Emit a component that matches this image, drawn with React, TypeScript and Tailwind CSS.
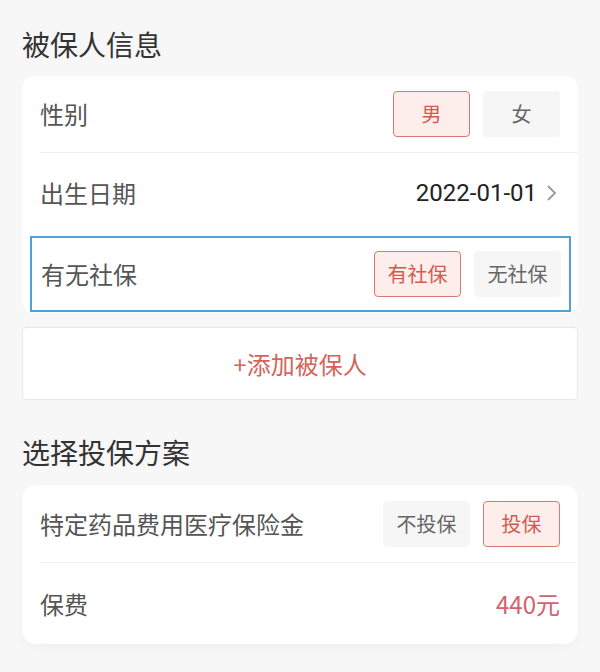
import React, { useState } from 'react';

const font = { fontFamily: '"Noto Sans CJK SC", "Noto Sans", sans-serif' };

const Choice: React.FC<{ label: string; active: boolean; onClick: () => void; wide?: boolean }> = ({ label, active, onClick, wide }) => (
  <button
    onClick={onClick}
    className={`h-[46px] ${wide ? 'w-[87px]' : 'w-[77px]'} rounded-[4px] text-[20px] leading-none border ${
      active ? 'bg-[#fdeeec] border-[#d87a72] text-[#d45a4e]' : 'bg-[#f6f6f6] border-transparent text-[#666]'
    }`}
  >
    {label}
  </button>
);

const App: React.FC = () => {
  const [gender, setGender] = useState('男');
  const [social, setSocial] = useState('有社保');
  const [buy, setBuy] = useState(true);

  return (
    <div className="min-h-[672px] w-[600px] bg-[#f7f7f7] px-[22px] pt-[28px]" style={font}>
      <h2 className="text-[28px] leading-[32px] text-[#333] mb-[16px]">被保人信息</h2>

      <div className="bg-white rounded-[12px]">
        <div className="flex items-center justify-between h-[77px] ml-[18px] pr-[18px] border-b border-[#f0f0f0]">
          <span className="text-[24px] text-[#555]">性别</span>
          <div className="flex gap-[13px]">
            <Choice label="男" active={gender === '男'} onClick={() => setGender('男')} />
            <Choice label="女" active={gender === '女'} onClick={() => setGender('女')} />
          </div>
        </div>

        <div className="flex items-center justify-between h-[79px] ml-[18px] pr-[20px]">
          <span className="text-[24px] text-[#555]">出生日期</span>
          <div className="flex items-center gap-[9px]">
            <span className="text-[24px] leading-none text-[#222]" style={{ fontFamily: '"Roboto", "Noto Sans", sans-serif' }}>2022-01-01</span>
            <svg width="12" height="18" viewBox="0 0 12 18" fill="none" stroke="#999" strokeWidth="1.8">
              <path d="M2 2l7 7-7 7" />
            </svg>
          </div>
        </div>

        <div className="pt-[4px] pb-[1px]">
          <div className="mx-[8px] mr-[7px] h-[76px] border-2 border-[#4ea1d9] flex items-center justify-between pl-[9px] pr-[8px]">
            <span className="text-[24px] text-[#555]">有无社保</span>
            <div className="flex gap-[13px]">
              <Choice label="有社保" wide active={social === '有社保'} onClick={() => setSocial('有社保')} />
              <Choice label="无社保" wide active={social === '无社保'} onClick={() => setSocial('无社保')} />
            </div>
          </div>
        </div>
      </div>

      <button className="mt-[14px] w-full h-[73px] bg-white rounded-[4px] border border-[#e8e8e8] text-[24px] text-[#d4645a]">
        +添加被保人
      </button>

      <h2 className="mt-[36px] text-[28px] leading-[32px] text-[#333] mb-[17px]">选择投保方案</h2>

      <div className="bg-white rounded-[14px] shadow-[0_4px_10px_rgba(0,0,0,0.03)]">
        <div className="flex items-center justify-between h-[78px] ml-[18px] pr-[18px] border-b border-[#f0f0f0]">
          <span className="text-[24px] text-[#555]">特定药品费用医疗保险金</span>
          <div className="flex gap-[13px]">
            <Choice label="不投保" wide active={!buy} onClick={() => setBuy(false)} />
            <Choice label="投保" active={buy} onClick={() => setBuy(true)} />
          </div>
        </div>
        <div className="flex items-center justify-between h-[81px] ml-[18px] pr-[18px]">
          <span className="text-[24px] text-[#555]">保费</span>
          <span className="text-[24px] text-[#d6616f]">440元</span>
        </div>
      </div>
    </div>
  );
};

export default App;
